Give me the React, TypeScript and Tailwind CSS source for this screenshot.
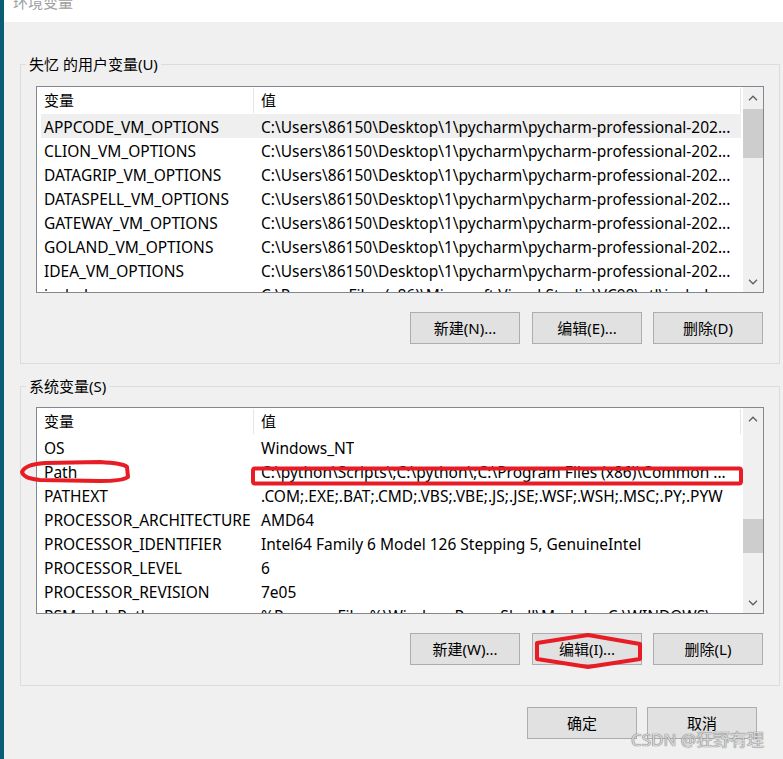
import React from "react";

type Row = [string, string];

const userRows: Row[] = [
  ["APPCODE_VM_OPTIONS", "C:\\Users\\86150\\Desktop\\1\\pycharm\\pycharm-professional-202..."],
  ["CLION_VM_OPTIONS", "C:\\Users\\86150\\Desktop\\1\\pycharm\\pycharm-professional-202..."],
  ["DATAGRIP_VM_OPTIONS", "C:\\Users\\86150\\Desktop\\1\\pycharm\\pycharm-professional-202..."],
  ["DATASPELL_VM_OPTIONS", "C:\\Users\\86150\\Desktop\\1\\pycharm\\pycharm-professional-202..."],
  ["GATEWAY_VM_OPTIONS", "C:\\Users\\86150\\Desktop\\1\\pycharm\\pycharm-professional-202..."],
  ["GOLAND_VM_OPTIONS", "C:\\Users\\86150\\Desktop\\1\\pycharm\\pycharm-professional-202..."],
  ["IDEA_VM_OPTIONS", "C:\\Users\\86150\\Desktop\\1\\pycharm\\pycharm-professional-202..."],
  ["include", "C:\\Program Files (x86)\\Microsoft Visual Studio\\VC98\\atl\\include;..."],
];

const sysRows: Row[] = [
  ["OS", "Windows_NT"],
  ["Path", "C:\\python\\Scripts\\;C:\\python\\;C:\\Program Files (x86)\\Common ..."],
  ["PATHEXT", ".COM;.EXE;.BAT;.CMD;.VBS;.VBE;.JS;.JSE;.WSF;.WSH;.MSC;.PY;.PYW"],
  ["PROCESSOR_ARCHITECTURE", "AMD64"],
  ["PROCESSOR_IDENTIFIER", "Intel64 Family 6 Model 126 Stepping 5, GenuineIntel"],
  ["PROCESSOR_LEVEL", "6"],
  ["PROCESSOR_REVISION", "7e05"],
  ["PSModulePath", "%ProgramFiles%\\WindowsPowerShell\\Modules;C:\\WINDOWS\\..."],
];

function Chevron({ up }: { up: boolean }) {
  return (
    <svg width="10" height="6" viewBox="0 0 10 6">
      <path
        d={up ? "M1 5.2 L5 1.2 L9 5.2" : "M1 0.8 L5 4.8 L9 0.8"}
        fill="none"
        stroke="#606060"
        strokeWidth="1.3"
      />
    </svg>
  );
}

function ScrollBar({ thumb }: { thumb: string }) {
  return (
    <div className="w-[20px] shrink-0 bg-[#f0f0f0] flex flex-col">
      <div className="h-[21px] flex items-center justify-center">
        <Chevron up />
      </div>
      <div className="flex-1 flex flex-col">
        <div className={"bg-[#cdcdcd] " + thumb} />
      </div>
      <div className="h-[21px] flex items-center justify-center">
        <Chevron up={false} />
      </div>
    </div>
  );
}

function ListView({ rows, thumb, highlight }: { rows: Row[]; thumb: string; highlight: number }) {
  return (
    <div className="h-[207px] border border-[#828790] bg-white flex">
      <div className="flex-1 overflow-hidden flex flex-col">
        <div className="h-[27px] shrink-0 flex">
          <div className="w-[217px] pl-[7px] border-r border-[#e5e5e5] my-[1px] flex items-center">变量</div>
          <div className="w-[487px] pl-[7px] border-r border-[#e5e5e5] my-[1px] flex items-center">值</div>
        </div>
        {rows.map((r, i) => (
          <div
            key={r[0]}
            className={
              "h-[24px] shrink-0 flex ml-[4px] w-[700px] whitespace-nowrap text-[15.5px] " +
              (i === highlight ? "bg-[#efefef]" : "")
            }
          >
            <div className="w-[213px] pl-[3px] shrink-0 leading-[26px]">{r[0]}</div>
            <div className="pl-[7px] overflow-hidden leading-[26px]">{r[1]}</div>
          </div>
        ))}
      </div>
      <ScrollBar thumb={thumb} />
    </div>
  );
}

function Btn({ children, cls = "" }: { children: React.ReactNode; cls?: string }) {
  return (
    <div
      className={
        "w-[110px] h-[32px] bg-[#e1e1e1] border border-[#adadad] flex items-center justify-center " + cls
      }
    >
      {children}
    </div>
  );
}

export default function App() {
  return (
    <div className="w-[783px] h-[759px] relative flex overflow-hidden bg-[#f0f0f0] text-black text-[15px] font-['Noto_Sans','Noto_Sans_CJK_SC',sans-serif]">
      <div className="w-[4px] shrink-0 bg-[#0a5d75]" />
      <div className="flex-1 flex flex-col">
        <div className="h-[22px] shrink-0 bg-white overflow-hidden pl-[9px]">
          <div className="text-[15px] leading-[15px] -mt-[5px] text-[#a0a0a0]">环境变量</div>
        </div>
        <div className="pl-[16px] pr-[3px]">
          <fieldset className="mt-[32px] border border-[#dcdcdc] px-[15px] pb-[19px]">
            <legend className="-ml-[10px] px-[3px] leading-[20px]">失忆 的用户变量(U)</legend>
            <div className="mt-[12px]">
              <ListView rows={userRows} thumb="mt-[1px] h-[49px]" highlight={0} />
            </div>
            <div className="mt-[19px] flex justify-end gap-[11px] pr-[1px]">
              <Btn cls="mr-[1px]">新建(N)...</Btn>
              <Btn>编辑(E)...</Btn>
              <Btn>删除(D)</Btn>
            </div>
          </fieldset>
          <fieldset className="mt-[12px] border border-[#dcdcdc] px-[15px] pb-[20px]">
            <legend className="-ml-[10px] px-[3px] leading-[20px]">系统变量(S)</legend>
            <div className="mt-[11px]">
              <ListView rows={sysRows} thumb="mt-[90px] h-[34px]" highlight={-1} />
            </div>
            <div className="mt-[19px] flex justify-end gap-[11px] pr-[1px]">
              <Btn cls="mr-[1px]">新建(W)...</Btn>
              <Btn>编辑(I)...</Btn>
              <Btn>删除(L)</Btn>
            </div>
          </fieldset>
        </div>
        <div className="mt-[21px] flex justify-end gap-[10px] pr-[26px]">
          <Btn>确定</Btn>
          <Btn>取消</Btn>
        </div>
      </div>

      <svg className="absolute inset-0 pointer-events-none" width="783" height="759" viewBox="0 0 783 759">
        <g fill="none" stroke="#e81c24" strokeWidth="4" strokeLinejoin="round">
          <path d="M22 472 C24 467 30 464 45 463 L100 462 C115 463 124 464 127 467 L128 477 C124 480 112 481 100 481 L40 480 C28 479 23 476 22 472 Z" />
          <rect x="253" y="468.5" width="488" height="15" rx="2" />
          <polygon points="537,643 588,635 640,644 640,659 588,667 537,659" />
        </g>
      </svg>
      <div className="absolute left-[631px] top-[730px] text-[17px] leading-[20px] text-[#d6d6d6] font-['Noto_Sans','Noto_Sans_CJK_SC',sans-serif] [text-shadow:0_0_1px_#777,0_0_1px_#777]">
        CSDN @狂野有理
      </div>
    </div>
  );
}
